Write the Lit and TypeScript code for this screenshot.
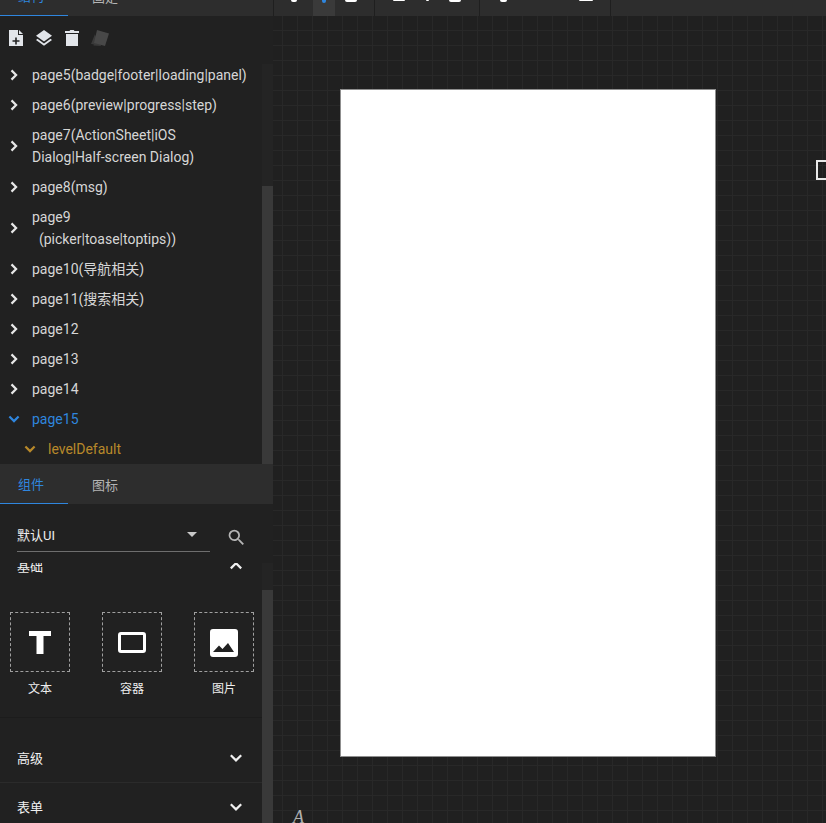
import { LitElement, html, css, svg } from 'lit';
import { customElement } from 'lit/decorators.js';

const treeRight = svg`<path d="M6.500 4.400 11.100 9 6.500 13.600"/>`;
const treeDown = svg`<path d="M4.400 6.500 9 11.100 13.600 6.500"/>`;
const panelDown = svg`<path d="M4.800 7.200 10 12.400 15.200 7.200"/>`;
const panelUp = svg`<path d="M4.800 12.400 10 7.200 15.200 12.400"/>`;

type TreeRow = { lines: string[] };

const rows: TreeRow[] = [
  { lines: ['page5(badge|footer|loading|panel)'] },
  { lines: ['page6(preview|progress|step)'] },
  { lines: ['page7(ActionSheet|iOS', 'Dialog|Half-screen Dialog)'] },
  { lines: ['page8(msg)'] },
  { lines: ['page9', '\u00a0\u00a0(picker|toase|toptips))'] },
  { lines: ['page10(导航相关)'] },
  { lines: ['page11(搜索相关)'] },
  { lines: ['page12'] },
  { lines: ['page13'] },
  { lines: ['page14'] },
];

// toolbar icons are scrolled out, only their lower edge shows
type Bit = { gap: number; w: number; h: number; blue?: boolean };

const toolGroups: { width: number; bits: Bit[] }[] = [
  { width: 101, bits: [{ gap: 17, w: 6, h: 2 }, { gap: 25, w: 4, h: 3, blue: true }, { gap: 19, w: 12, h: 2 }] },
  { width: 105, bits: [{ gap: 18, w: 12, h: 1 }, { gap: 21, w: 3, h: 1 }, { gap: 20, w: 12, h: 2 }] },
  { width: 131, bits: [{ gap: 20, w: 7, h: 2 }, { gap: 72, w: 14, h: 1 }] },
];

@customElement('app-root')
export class AppRoot extends LitElement {
  static styles = css`
    :host {
      display: flex;
      width: 826px;
      height: 823px;
      overflow: hidden;
      background: #212121;
      color: #fff;
      font-family: Roboto, "Noto Sans CJK SC", sans-serif;
      font-size: 14px;
    }

    .icon {
      display: block;
      fill: currentColor;
    }
    .chev {
      display: block;
      fill: none;
      stroke: currentColor;
      stroke-width: 2.2;
    }

    .side {
      width: 273px;
      flex: none;
      display: flex;
      flex-direction: column;
      height: 823px;
      overflow: hidden;
    }

    /* tab strip, the top one is scrolled 24px out of the window */
    .tabs {
      height: 40px;
      flex: none;
      display: flex;
      background: #2d2d2d;
      color: #b4b4b4;
      font-size: 13px;
    }
    .tabs.cut {
      margin-top: -24px;
    }
    .tab {
      width: 68px;
      display: flex;
      align-items: center;
      padding-left: 18px;
      box-sizing: border-box;
    }
    .tab + .tab {
      width: 76px;
      padding-left: 24px;
    }
    .tab.on {
      color: #2f86de;
      border-bottom: 1px solid #2f86de;
    }

    .tools {
      height: 44px;
      flex: none;
      display: flex;
      align-items: center;
      gap: 8px;
      padding-left: 6px;
    }
    .tools svg {
      width: 20px;
      height: 20px;
      color: #e2e5ea;
    }

    .upper {
      height: 404px;
      flex: none;
      display: flex;
      overflow: hidden;
    }
    .tree {
      flex: 1;
      min-width: 0;
      color: #d6d6d6;
    }
    .bar {
      width: 11px;
      flex: none;
      display: flex;
      flex-direction: column;
      background: #242424;
    }
    .bar.tree-bar {
      margin-top: 4px;
    }
    .bar.low-bar {
      margin-top: 59px;
    }
    .bar.tree-bar .gap {
      height: 122px;
    }
    .bar.low-bar .gap {
      height: 27px;
    }
    .thumb {
      background: #393939;
      flex: 1;
    }

    .row {
      display: flex;
      align-items: center;
      padding: 4px 0 4px 5px;
      line-height: 22px;
    }
    .row .chev {
      width: 18px;
      height: 18px;
      flex: none;
      margin-right: 9px;
      color: #e8e8e8;
    }
    .row.open,
    .row.open .chev {
      color: #2f86de;
    }
    .row.level {
      padding-left: 21px;
      color: #b8892a;
    }
    .row.level .chev {
      color: #b8892a;
    }

    .lower {
      flex: 1;
      display: flex;
      min-height: 0;
    }
    .palette {
      flex: 1;
      min-width: 0;
    }

    .picker {
      display: flex;
      align-items: flex-start;
      padding: 19px 0 0 17px;
      height: 59px;
      box-sizing: border-box;
    }
    .select {
      width: 193px;
      height: 29px;
      padding-bottom: 6px;
      display: flex;
      align-items: center;
      justify-content: space-between;
      border-bottom: 1px solid #6e6e6e;
      font-size: 13px;
      color: #eee;
      box-sizing: border-box;
    }
    .select i {
      width: 0;
      height: 0;
      margin-right: 13px;
      border: 5px solid transparent;
      border-top-color: #c8c8c8;
      border-bottom: 0;
    }
    .search {
      width: 21px;
      height: 21px;
      margin: 4px 0 0 16px;
      color: #b5b5b5;
    }

    .scroll {
      overflow: hidden;
    }
    .group {
      display: flex;
      align-items: center;
      justify-content: space-between;
      height: 48px;
      padding: 0 16px 0 17px;
      font-size: 13px;
      color: #f0f0f0;
    }
    .group span {
      margin-bottom: 2px;
    }
    .group .chev {
      width: 20px;
      height: 20px;
    }
    .group.base {
      margin-top: -21px;
    }
    .group.plain {
      margin-top: 16px;
    }
    .group.ruled {
      border-top: 1px solid #2b2b2b;
    }

    .items {
      display: flex;
      gap: 32px;
      padding: 22px 0 19px 10px;
      border-bottom: 1px solid #1c1c1c;
    }
    .item {
      width: 60px;
      font-size: 12px;
      line-height: 18px;
      text-align: center;
      color: #eee;
    }
    .box {
      height: 60px;
      display: flex;
      align-items: center;
      justify-content: center;
      border: 1px dashed #a0a0a0;
      box-sizing: border-box;
      margin-bottom: 8px;
      color: #fff;
    }
    .box svg {
      width: 36px;
      height: 36px;
    }

    .canvas {
      flex: 1;
      display: flex;
      flex-direction: column;
      min-width: 0;
    }
    .top {
      height: 16px;
      flex: none;
      display: flex;
      background: #2d2d2d;
      overflow: hidden;
    }
    .tool-group {
      flex: none;
      position: relative;
      display: flex;
      align-items: flex-start;
      border-left: 1px solid #1f1f1f;
      box-sizing: border-box;
    }
    .tool-group.rest {
      flex: 1;
    }
    .hot {
      position: absolute;
      left: 39px;
      top: 0;
      width: 22px;
      height: 16px;
      background: #3a3a3a;
    }
    .bit {
      position: relative;
      flex: none;
      background: #fff;
      border-radius: 0 0 2px 2px;
    }
    .bit.blue {
      background: #2f86de;
    }

    .sheet {
      flex: 1;
      position: relative;
      overflow: hidden;
      background-color: #202020;
      background-image:
        linear-gradient(to right, #282828 1px, transparent 1px),
        linear-gradient(to bottom, #282828 1px, transparent 1px);
      background-size: 15px 15px;
      background-position: 9px 14px;
    }
    .page {
      position: absolute;
      left: 67px;
      top: 73px;
      width: 376px;
      height: 668px;
      background: #fff;
      border: 1px solid #8f8f8f;
      box-sizing: border-box;
    }
    .stray {
      position: absolute;
      left: 543px;
      top: 144px;
      width: 30px;
      height: 20px;
      border: 2px solid #e8e8e8;
      box-sizing: border-box;
    }
    .letter {
      position: absolute;
      left: 20px;
      top: 791px;
      font: italic 18px "Liberation Serif", serif;
      color: #b0b0b0;
    }
  `;

  private renderTree() {
    return html`
      ${rows.map(r => html`
        <div class="row">
          <svg class="chev" viewBox="0 0 18 18">${treeRight}</svg>
          <div>${r.lines.map(l => html`<div>${l}</div>`)}</div>
        </div>
      `)}
      <div class="row open"><svg class="chev" viewBox="0 0 18 18">${treeDown}</svg><div>page15</div></div>
      <div class="row level"><svg class="chev" viewBox="0 0 18 18">${treeDown}</svg><div>levelDefault</div></div>
    `;
  }

  render() {
    return html`
      <div class="side">
        <div class="tabs cut">
          <div class="tab on">结构</div>
          <div class="tab">固定</div>
        </div>
        <div class="tools">
          <svg class="icon" viewBox="0 0 20 20"><path fill-rule="evenodd" d="M3 2h9v5h5v11H3zM13 2l4 4h-4zM9.200 9.500v2.700H6.500v1.600h2.700v2.700h1.600v-2.700h2.700v-1.600h-2.700V9.500z"/></svg>
          <svg class="icon" viewBox="0 0 20 20"><path d="M10 2 2 7.800l8 5.800 8-5.800zM3.500 10.700 2 11.900l8 5.900 8-5.900-1.500-1.200L10 15.500z"/></svg>
          <svg class="icon" viewBox="0 0 20 20"><path d="M4 6h12v12H4zM3 3h4.500l.8-1h3.400l.8 1H17v2H3z"/></svg>
          <svg class="icon" viewBox="0 0 20 20">
            <path fill="#3a3a3a" d="M1 16 5 6l3 11zM3.500 17.500 7 4l4 14z"/>
            <path fill="#484848" d="M7 2l12 3.500-4 12.500-11-3z"/>
          </svg>
        </div>
        <div class="upper">
          <div class="tree">${this.renderTree()}</div>
          <div class="bar tree-bar"><div class="gap"></div><div class="thumb"></div></div>
        </div>
        <div class="tabs">
          <div class="tab on">组件</div>
          <div class="tab">图标</div>
        </div>
        <div class="lower">
          <div class="palette">
            <div class="picker">
              <div class="select"><span>默认UI</span><i></i></div>
              <svg class="icon search" viewBox="0 0 24 24"><path d="M15.500 14h-.79l-.28-.27A6.470 6.470 0 0 0 16 9.500 6.500 6.500 0 1 0 9.500 16c1.610 0 3.090-.59 4.230-1.570l.27.28v.79l5 4.990L20.490 19l-4.990-5zm-6 0C7.010 14 5 11.990 5 9.500S7.010 5 9.500 5 14 7.010 14 9.500 11.990 14 9.500 14z"/></svg>
            </div>
            <div class="scroll">
              <div class="group base"><span>基础</span><svg class="chev" viewBox="0 0 20 20">${panelUp}</svg></div>
              <div class="items">
                <div class="item">
                  <div class="box"><svg class="icon" viewBox="0 0 36 36"><path d="M7 7h22v5h-7.500v18h-7V12H7z"/></svg></div>
                  文本
                </div>
                <div class="item">
                  <div class="box"><svg class="icon" viewBox="0 0 36 36"><path fill-rule="evenodd" d="M7 8h22a3 3 0 0 1 3 3v15a3 3 0 0 1-3 3H7a3 3 0 0 1-3-3V11a3 3 0 0 1 3-3zm0 3v15h22V11z"/></svg></div>
                  容器
                </div>
                <div class="item">
                  <div class="box"><svg class="icon" viewBox="0 0 36 36"><path fill-rule="evenodd" d="M7 5h22a3 3 0 0 1 3 3v22a3 3 0 0 1-3 3H7a3 3 0 0 1-3-3V8a3 3 0 0 1 3-3zm0 23h21l-6-9-5.500 6-3.500-3.500z"/></svg></div>
                  图片
                </div>
              </div>
              <div class="group plain"><span>高级</span><svg class="chev" viewBox="0 0 20 20">${panelDown}</svg></div>
              <div class="group ruled"><span>表单</span><svg class="chev" viewBox="0 0 20 20">${panelDown}</svg></div>
            </div>
          </div>
          <div class="bar low-bar"><div class="gap"></div><div class="thumb"></div></div>
        </div>
      </div>
      <div class="canvas">
        <div class="top">
          ${toolGroups.map((g, i) => html`
            <div class="tool-group" style="width:${g.width}px">
              ${i === 0 ? html`<div class="hot"></div>` : ''}
              ${g.bits.map(b => html`<span class="bit ${b.blue ? 'blue' : ''}" style="margin-left:${b.gap}px;width:${b.w}px;height:${b.h}px"></span>`)}
            </div>
          `)}
          <div class="tool-group rest"></div>
        </div>
        <div class="sheet">
          <div class="page"></div>
          <div class="stray"></div>
          <div class="letter">A</div>
        </div>
      </div>
    `;
  }
}
